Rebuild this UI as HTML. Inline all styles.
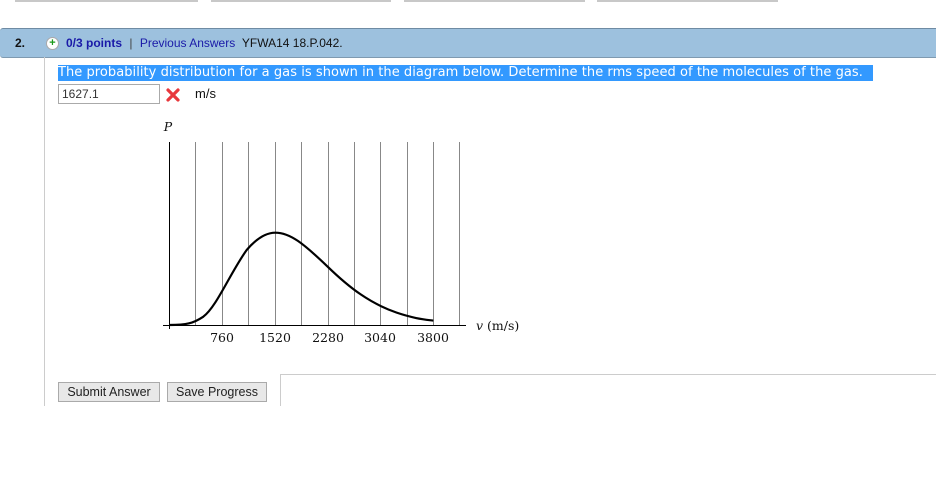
<!DOCTYPE html>
<html><head><meta charset="utf-8"><style>
body{margin:0;width:936px;height:504px;background:#fff;position:relative;overflow:hidden;font-family:"Liberation Sans",Arial,sans-serif}
.a{position:absolute}
.tab{position:absolute;top:0;height:2px;background:#c8c8c8}
.hdr{position:absolute;left:0;top:28px;width:936px;height:28px;background:#9dc1de;border-top:1px solid #6f8ba3;border-bottom:1px solid #7f9ab0;border-radius:3px 0 0 3px}
.q{position:absolute;left:58px;top:65px;height:16px;width:815px;background:#3399ff;color:#fff;font:13px "DejaVu Sans",Verdana,sans-serif;line-height:16px;white-space:nowrap;letter-spacing:0.05px}
.btn{position:absolute;top:382px;height:18px;background:#e8e8e8;border:1px solid #aaa;font-size:12.5px;line-height:18px;text-align:center;color:#222}
</style></head><body>
<div class="tab" style="left:15px;width:183px"></div>
<div class="tab" style="left:211px;width:180px"></div>
<div class="tab" style="left:404px;width:181px"></div>
<div class="tab" style="left:597px;width:181px"></div>
<div class="hdr"></div>
<div class="a" style="left:15px;top:36px;font-size:12px;font-weight:bold;color:#111">2.</div>
<div class="a" style="left:46px;top:37px;width:11px;height:11px;border-radius:50%;background:#fff;border:1px solid #aaa;color:#1a9a1a;font-size:11px;font-weight:bold;line-height:11px;text-align:center">+</div>
<div class="a" style="left:66px;top:36px;font-size:12px;white-space:nowrap"><b style="color:#1a1aa8">0/3 points</b> <span style="color:#444;margin:0 4px 0 4px">|</span> <span style="color:#1a1aa8">Previous Answers</span> <span style="color:#111">&nbsp;YFWA14 18.P.042.</span></div>
<div class="a" style="left:44px;top:57px;width:1px;height:349px;background:#ccc"></div>
<div class="q">The probability distribution for a gas is shown in the diagram below. Determine the rms speed of the molecules of the gas.</div>
<div class="a" style="left:58px;top:84px;width:100px;height:18px;border:1px solid #aaa;font-size:12px;line-height:18px;color:#333;box-sizing:content-box"><span style="padding-left:3px">1627.1</span></div>
<svg class="a" style="left:166px;top:88px" width="14" height="14" viewBox="0 0 14 14"><path d="M2 2L12 12M12 2L2 12" stroke="#e8383d" stroke-width="3.2" stroke-linecap="round"/></svg>
<div class="a" style="left:195px;top:86px;font-size:13px;color:#111">m/s</div>
<svg class="a" style="left:0;top:0" width="936" height="504">
<g stroke="#888" stroke-width="1">
<line x1="195.5" y1="142" x2="195.5" y2="325"/><line x1="222.5" y1="142" x2="222.5" y2="325"/><line x1="248.5" y1="142" x2="248.5" y2="325"/><line x1="275.5" y1="142" x2="275.5" y2="325"/><line x1="301.5" y1="142" x2="301.5" y2="325"/><line x1="328.5" y1="142" x2="328.5" y2="325"/><line x1="354.5" y1="142" x2="354.5" y2="325"/><line x1="380.5" y1="142" x2="380.5" y2="325"/><line x1="407.5" y1="142" x2="407.5" y2="325"/><line x1="433.5" y1="142" x2="433.5" y2="325"/><line x1="459.5" y1="142" x2="459.5" y2="325"/>
</g>
<line x1="169.5" y1="142" x2="169.5" y2="329" stroke="#000"/>
<line x1="163" y1="325.5" x2="466" y2="325.5" stroke="#000"/>
<g transform="translate(150,110) scale(0.33333)"><path fill="none" stroke="#000" stroke-width="6.5" d="M58,645 C110,645 130,640 160,620 C200,590 240,490 290,420 C320,385 350,368 376,368 C420,368 460,400 533,470 C600,535 660,580 740,608 C790,625 820,628 850,632"/></g>
<g font-family="DejaVu Serif,Liberation Serif,serif" font-size="12.5" fill="#111" text-anchor="middle">
<text x="222" y="342">760</text><text x="275" y="342">1520</text><text x="328" y="342">2280</text><text x="380" y="342">3040</text><text x="433" y="342">3800</text>
<text x="168" y="131" font-style="italic">P</text>
<text x="476" y="330" text-anchor="start"><tspan font-style="italic">v</tspan> (m/s)</text>
</g>
</svg>
<div class="btn" style="left:58px;width:100px">Submit Answer</div>
<div class="btn" style="left:167px;width:98px">Save Progress</div>
<div class="a" style="left:280px;top:374px;width:656px;height:1px;background:#ccc"></div>
<div class="a" style="left:280px;top:374px;width:1px;height:32px;background:#ccc"></div>
</body></html>
